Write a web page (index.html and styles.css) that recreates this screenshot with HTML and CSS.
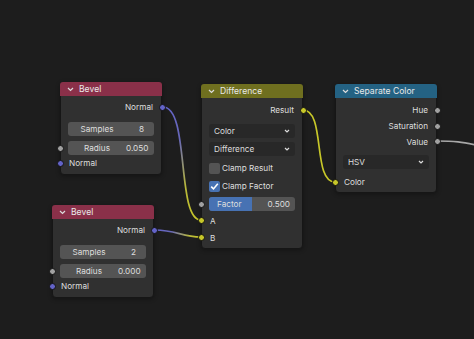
FILE: index.html
```html
<!DOCTYPE html>
<html lang="en">
<head>
    <meta charset="UTF-8">
    <meta name="viewport" content="width=device-width, initial-scale=1.0">
    <title>Node Editor</title>
    <link rel="stylesheet" href="styles.css">
</head>
<body>
    <div class="editor">
        <svg class="links" width="474" height="339" viewBox="0 0 474 339">
            <defs>
                <linearGradient id="link-a" gradientUnits="userSpaceOnUse" x1="163" y1="107" x2="201" y2="220">
                    <stop offset="0" stop-color="#6363c7"/>
                    <stop offset="0.3" stop-color="#6868b8"/>
                    <stop offset="0.7" stop-color="#b8b83a"/>
                    <stop offset="1" stop-color="#c7c729"/>
                </linearGradient>
                <linearGradient id="link-b" gradientUnits="userSpaceOnUse" x1="155" y1="230" x2="201" y2="237">
                    <stop offset="0" stop-color="#6363c7"/>
                    <stop offset="0.35" stop-color="#6868b8"/>
                    <stop offset="0.75" stop-color="#b8b83a"/>
                    <stop offset="1" stop-color="#c7c729"/>
                </linearGradient>
            </defs>
            <path class="link" d="M163 107 C 190 107, 176 220, 201 220" stroke="url(#link-a)"/>
            <path class="link" d="M155 230 C 176 230, 182 237, 201 237" stroke="url(#link-b)"/>
            <path class="link" d="M303 110 C 326 110, 312 182, 335 182" stroke="#c7c729"/>
            <path class="link" d="M437 141 C 455 141, 462 142, 476 145" stroke="#a8a8a8"/>
        </svg>

        <!-- Bevel (arriba) -->
        <div class="node node-bevel-a">
            <div class="node-header header-vector">
                <svg class="chevron" width="7" height="5" viewBox="0 0 7 5"><path d="M1 1 L3.5 3.5 L6 1"/></svg>
                Bevel
            </div>
            <div class="node-body">
                <div class="row row-out">Normal<span class="socket socket-out socket-vector"></span></div>
                <div class="row row-field gap-7">
                    <div class="field"><span class="field-label">Samples</span><span>8</span></div>
                </div>
                <div class="row row-field gap-5">
                    <span class="socket socket-in socket-float"></span>
                    <div class="field"><span class="field-label">Radius</span><span>0.050</span></div>
                </div>
                <div class="row row-in"><span class="socket socket-in socket-vector"></span>Normal</div>
            </div>
        </div>

        <!-- Bevel (abajo) -->
        <div class="node node-bevel-b">
            <div class="node-header header-vector">
                <svg class="chevron" width="7" height="5" viewBox="0 0 7 5"><path d="M1 1 L3.5 3.5 L6 1"/></svg>
                Bevel
            </div>
            <div class="node-body">
                <div class="row row-out">Normal<span class="socket socket-out socket-vector"></span></div>
                <div class="row row-field gap-7">
                    <div class="field"><span class="field-label">Samples</span><span>2</span></div>
                </div>
                <div class="row row-field gap-5">
                    <span class="socket socket-in socket-float"></span>
                    <div class="field"><span class="field-label">Radius</span><span>0.000</span></div>
                </div>
                <div class="row row-in"><span class="socket socket-in socket-vector"></span>Normal</div>
            </div>
        </div>

        <!-- Difference -->
        <div class="node node-mix">
            <div class="node-header header-color">
                <svg class="chevron" width="7" height="5" viewBox="0 0 7 5"><path d="M1 1 L3.5 3.5 L6 1"/></svg>
                Difference
            </div>
            <div class="node-body body-mix">
                <div class="row row-out">Result<span class="socket socket-out socket-color"></span></div>
                <div class="row row-field gap-6">
                    <div class="dropdown">Color<svg class="drop-arrow" width="6" height="4" viewBox="0 0 6 4"><path d="M1 1 L3 3 L5 1"/></svg></div>
                </div>
                <div class="row row-field gap-4">
                    <div class="dropdown">Difference<svg class="drop-arrow" width="6" height="4" viewBox="0 0 6 4"><path d="M1 1 L3 3 L5 1"/></svg></div>
                </div>
                <div class="row row-check gap-4">
                    <span class="checkbox"></span>Clamp Result
                </div>
                <div class="row row-check gap-2">
                    <span class="checkbox checked">
                        <svg width="11" height="11" viewBox="0 0 11 11"><path d="M2.2 5.6 L4.5 7.9 L8.8 2.8"/></svg>
                    </span>Clamp Factor
                </div>
                <div class="row row-field gap-3">
                    <span class="socket socket-in socket-float"></span>
                    <div class="field slider">
                        <span class="slider-fill"></span>
                        <span class="slider-label">Factor</span><span class="slider-value">0.500</span>
                    </div>
                </div>
                <div class="row row-in tall gap-1"><span class="socket socket-in socket-color"></span>A</div>
                <div class="row row-in tall"><span class="socket socket-in socket-color"></span>B</div>
            </div>
        </div>

        <!-- Separate Color -->
        <div class="node node-separate">
            <div class="node-header header-converter">
                <svg class="chevron" width="7" height="5" viewBox="0 0 7 5"><path d="M1 1 L3.5 3.5 L6 1"/></svg>
                Separate Color
            </div>
            <div class="node-body body-separate">
                <div class="row row-out">Hue<span class="socket socket-out socket-float"></span></div>
                <div class="row row-out">Saturation<span class="socket socket-out socket-float"></span></div>
                <div class="row row-out short">Value<span class="socket socket-out socket-float"></span></div>
                <div class="row row-field gap-6">
                    <div class="dropdown">HSV<svg class="drop-arrow" width="6" height="4" viewBox="0 0 6 4"><path d="M1 1 L3 3 L5 1"/></svg></div>
                </div>
                <div class="row row-in gap-5"><span class="socket socket-in socket-color"></span>Color</div>
            </div>
        </div>
    </div>
</body>
</html>
```

FILE: styles.css
```css
/* Colores del editor de nodos */
:root {
    --editor-bg: #1d1d1d;
    --node-bg: #303030;
    --node-border: #161616;
    --text-color: #dedede;
    --field-bg: #545454;
    --dropdown-bg: #282828;
    --accent: #4772b3;
    --vector: #6363c7;
    --color: #c7c729;
    --float: #a1a1a1;
}

* {
    box-sizing: border-box;
}

body {
    margin: 0;
    background-color: var(--editor-bg);
    font-family: Inter, "DejaVu Sans", sans-serif;
    font-size: 8.2px;
    color: var(--text-color);
}

.editor {
    position: relative;
    width: 474px;
    height: 339px;
    overflow: hidden;
    background-color: var(--editor-bg);
}

.links {
    position: absolute;
    left: 0;
    top: 0;
}
.link {
    fill: none;
    stroke-width: 1.7;
}

/* Nodos */
.node {
    position: absolute;
    width: 102px;
    background-color: var(--node-bg);
    border: 1px solid var(--node-border);
    border-radius: 4px;
    box-shadow: 0 1px 4px rgba(0, 0, 0, 0.35);
}
.node-bevel-a { left: 60px; top: 82px; }
.node-bevel-b { left: 52px; top: 205px; }
.node-mix { left: 201px; top: 84px; }
.node-separate { left: 335px; top: 84px; }

.node-header {
    height: 14px;
    display: flex;
    align-items: center;
    gap: 5px;
    padding-left: 7px;
    border-radius: 3px 3px 0 0;
    color: #e8e8e8;
    font-size: 8.6px;
    margin: -1px -1px 0 -1px;
}
.header-vector { background-color: #8a3049; }
.header-color { background-color: #6f6f1f; }
.header-converter { background-color: #246283; }

.chevron path,
.drop-arrow path {
    fill: none;
    stroke: #dcdcdc;
    stroke-width: 1.2;
}

.node-body {
    padding: 3px 0 3px 0;
}
.body-mix {
    padding: 4px 0 2px 0;
}
.body-separate {
    padding: 4px 0 2px 0;
}

/* Filas */
.row {
    position: relative;
    display: flex;
    align-items: center;
    height: 16px;
}
.row-out {
    justify-content: flex-end;
    padding-right: 8px;
}
.row-out.short {
    height: 15px;
}
.row-in {
    padding-left: 8px;
}
.row-in.tall {
    height: 17px;
}
.row-field {
    height: 14px;
    padding: 0 7px;
}
.row-check {
    padding-left: 7px;
    gap: 2px;
}

.gap-1 { margin-top: 1px; }
.gap-2 { margin-top: 2px; }
.gap-3 { margin-top: 3px; }
.gap-4 { margin-top: 4px; }
.gap-5 { margin-top: 5px; }
.gap-6 { margin-top: 6px; }
.gap-7 { margin-top: 7px; }

/* Sockets */
.socket {
    position: absolute;
    top: 50%;
    width: 7px;
    height: 7px;
    margin-top: -3.5px;
    border-radius: 50%;
    border: 1px solid #111;
}
.socket-out { right: -4.5px; }
.socket-in { left: -4.5px; }
.socket-vector { background-color: var(--vector); }
.socket-color { background-color: var(--color); }
.socket-float { background-color: var(--float); }

/* Campos */
.field {
    position: relative;
    flex: 1;
    height: 14px;
    display: flex;
    align-items: center;
    justify-content: space-between;
    padding: 0 10px 0 0;
    background-color: var(--field-bg);
    border-radius: 3px;
    overflow: hidden;
}
.field-label {
    flex: 0 0 58px;
    text-align: center;
}
.slider {
    padding: 0 5px 0 0;
}
.slider-fill {
    position: absolute;
    left: 0;
    top: 0;
    bottom: 0;
    width: 50%;
    background-color: var(--accent);
}
.slider .slider-label {
    position: relative;
    flex: 0 0 50%;
    text-align: center;
}
.slider-value {
    position: relative;
}

.dropdown {
    flex: 1;
    height: 14px;
    display: flex;
    align-items: center;
    justify-content: space-between;
    padding: 0 5px 0 5px;
    background-color: var(--dropdown-bg);
    border-radius: 3px;
}

.checkbox {
    width: 11px;
    height: 11px;
    border-radius: 2px;
    background-color: var(--field-bg);
    display: flex;
}
.checkbox.checked {
    background-color: var(--accent);
}
.checkbox path {
    fill: none;
    stroke: #ffffff;
    stroke-width: 1.6;
}
```
